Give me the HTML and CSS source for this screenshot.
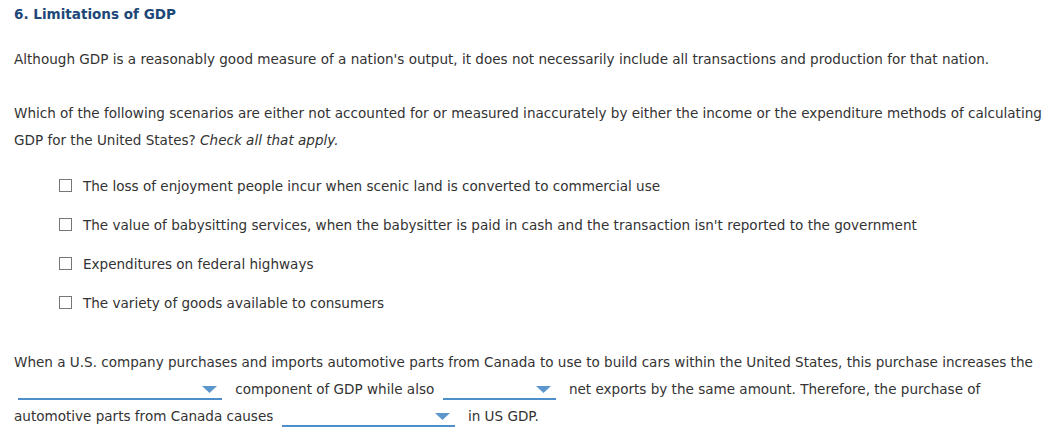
FILE: index.html
```html
<!DOCTYPE html>
<html>
<head>
<meta charset="utf-8">
<link rel="stylesheet" href="styles.css">
</head>
<body>
<div class="page">
  <h1 class="title">6. Limitations of GDP</h1>
  <p class="para first">Although GDP is a reasonably good measure of a nation's output, it does not necessarily include all transactions and production for that nation.</p>
  <p class="para">Which of the following scenarios are either not accounted for or measured inaccurately by either the income or the expenditure methods of calculating<br>GDP for the United States? <em>Check all that apply.</em></p>
  <ul class="choices">
    <li class="choice"><span class="box"></span><span>The loss of enjoyment people incur when scenic land is converted to commercial use</span></li>
    <li class="choice"><span class="box"></span><span>The value of babysitting services, when the babysitter is paid in cash and the transaction isn't reported to the government</span></li>
    <li class="choice"><span class="box"></span><span>Expenditures on federal highways</span></li>
    <li class="choice"><span class="box"></span><span>The variety of goods available to consumers</span></li>
  </ul>
  <p class="para last">When a U.S. company purchases and imports automotive parts from Canada to use to build cars within the United States, this purchase increases the<br><span class="dd w1"><svg class="arrow" width="15" height="7" viewBox="0 0 15 7"><path d="M0 0H15L7.5 7Z" fill="#5b97cc"/></svg></span> component of GDP while also <span class="dd w2"><svg class="arrow" width="15" height="7" viewBox="0 0 15 7"><path d="M0 0H15L7.5 7Z" fill="#5b97cc"/></svg></span> net exports by the same amount. Therefore, the purchase of<br>automotive parts from Canada causes <span class="dd w3"><svg class="arrow" width="15" height="7" viewBox="0 0 15 7"><path d="M0 0H15L7.5 7Z" fill="#5b97cc"/></svg></span> in US GDP.</p>
</div>
</body>
</html>
```
FILE: styles.css
```css
html, body {
  margin: 0;
  padding: 0;
  background: #ffffff;
}
.page {
  padding: 0 0 0 14px;
  font-family: "DejaVu Sans", Verdana, sans-serif;
  font-size: 13.55px;
  color: #333333;
}
.title {
  margin: 0;
  font-size: 13.55px;
  font-weight: bold;
  line-height: 28px;
  color: #1d4878;
}
.para {
  margin: 27px 0 0;
  line-height: 27px;
  white-space: nowrap;
}
.para.first {
  margin-top: 18px;
}
.para.last {
  margin-top: 27px;
}
.choices {
  list-style: none;
  margin: 12px 0 0;
  padding: 0 0 0 45px;
}
.choice {
  display: flex;
  align-items: center;
  height: 39px;
}
.box {
  width: 11px;
  height: 11px;
  border: 1px solid #777777;
  margin-right: 11px;
  flex: none;
}
.dd {
  display: inline-block;
  box-sizing: border-box;
  height: 18px;
  padding: 4px 5px 0 0;
  border-bottom: 2px solid #4d8fc8;
  vertical-align: -5.5px;
  margin: 0 9px 0 4px;
}
.arrow {
  display: block;
  margin-left: auto;
}
.w1 { width: 204px; }
.w2 { width: 113px; }
.w3 { width: 173px; }
```
